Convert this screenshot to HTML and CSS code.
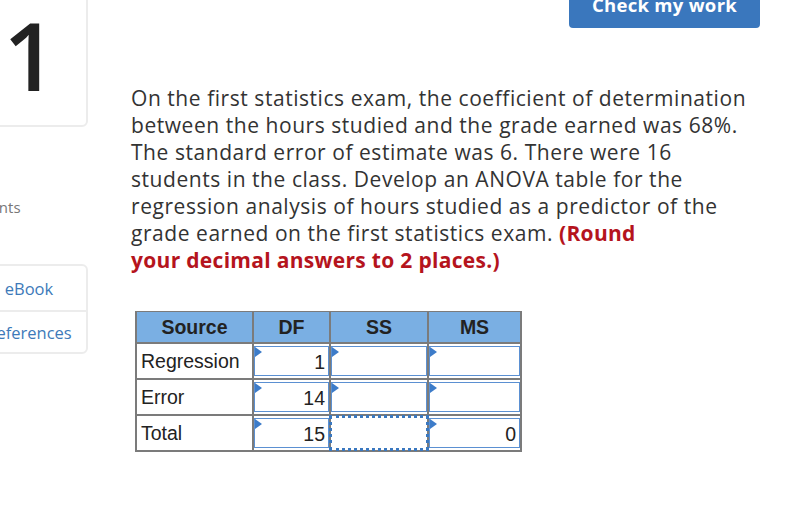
FILE: index.html
```html
<!DOCTYPE html>
<html>
<head>
<meta charset="utf-8">
<link rel="stylesheet" href="styles.css">
</head>
<body>
<div class="page">
  <aside class="sidebar">
    <div class="card num-card"><span class="qnum">1</span></div>
    <div class="points">Points</div>
    <div class="card links">
      <a class="link">eBook</a>
      <a class="link">References</a>
    </div>
  </aside>
  <main class="main">
    <div class="topbar"><button class="check">Check my work</button></div>
    <p class="question">On the first statistics exam, the coefficient of determination between the hours studied and the grade earned was 68%. The standard error of estimate was 6. There were 16 students in the class. Develop an ANOVA table for the regression analysis of hours studied as a predictor of the grade earned on the first statistics exam. <strong class="note">(Round<br>your decimal answers to 2 places.)</strong></p>
    <table class="anova">
      <thead>
        <tr><th class="c-src">Source</th><th class="c-df">DF</th><th class="c-ss">SS</th><th class="c-ms">MS</th></tr>
      </thead>
      <tbody>
        <tr>
          <td class="label">Regression</td>
          <td class="cell"><div class="box flag">1</div></td>
          <td class="cell"><div class="box flag"></div></td>
          <td class="cell"><div class="box flag"></div></td>
        </tr>
        <tr>
          <td class="label">Error</td>
          <td class="cell"><div class="box flag">14</div></td>
          <td class="cell"><div class="box flag"></div></td>
          <td class="cell"><div class="box flag"></div></td>
        </tr>
        <tr>
          <td class="label">Total</td>
          <td class="cell"><div class="box flag">15</div></td>
          <td class="cell focus"><div class="box dotted"></div></td>
          <td class="cell"><div class="box flag">0</div></td>
        </tr>
      </tbody>
    </table>
  </main>
</div>
</body>
</html>
```
FILE: styles.css
```css
html, body {
  margin: 0;
  padding: 0;
  background: #fff;
  overflow: hidden;
}
body {
  font-family: "Open Sans", "Lato", sans-serif;
  color: #333;
}
.page {
  display: flex;
  align-items: flex-start;
}
.sidebar {
  width: 120px;
  margin-left: -32px;
  flex: none;
  display: flex;
  flex-direction: column;
}
.card {
  border: 2px solid #ececec;
  border-radius: 6px;
  background: #fff;
}
.num-card {
  margin-top: -20px;
  height: 143px;
  display: flex;
  align-items: center;
  justify-content: center;
  padding-left: 4px;
}
.qnum {
  font-family: "Open Sans", sans-serif;
  font-size: 94px;
  line-height: 1;
  color: #222;
  font-weight: 600;
  margin-top: 2px;
}
.points {
  margin-top: 70px;
  padding-left: 9px;
  font-size: 15px;
  color: #777;
  height: 20px;
}
.links {
  margin-top: 47px;
  display: flex;
  flex-direction: column;
}
.link {
  height: 44px;
  display: flex;
  align-items: center;
  justify-content: center;
  padding-left: 2px;
  font-size: 16.5px;
  color: #3d7ab9;
}
.link + .link {
  height: 40px;
  border-top: 2px solid #ececec;
}
.main {
  flex: 1;
  margin-left: 41px;
  display: flex;
  flex-direction: column;
  align-items: flex-start;
}
.topbar {
  align-self: stretch;
  display: flex;
  justify-content: flex-end;
  padding-right: 33px;
}
.check {
  margin-top: -20px;
  width: 191px;
  height: 48px;
  background: #3a77bd;
  color: #fff;
  border: none;
  border-radius: 4px;
  font-family: "Open Sans", sans-serif;
  font-weight: 700;
  font-size: 18.5px;
  letter-spacing: 0.3px;
  padding: 0;
}
.question {
  margin: 57px 0 0 2px;
  width: 624px;
  font-size: 21px;
  letter-spacing: 0.55px;
  line-height: 27px;
  color: #333;
}
.note {
  color: #b5141d;
  font-weight: 700;
  letter-spacing: 0.3px;
}
.anova {
  margin-top: 37px;
  margin-left: 6px;
  border-collapse: collapse;
  font-family: "Liberation Sans", Arial, sans-serif;
  font-size: 19.5px;
  color: #222;
}
.anova th {
  background: #7aafe3;
  border: 2px solid #7b7b7b;
  border-top-width: 1px;
  height: 30px;
  font-weight: 700;
  padding: 0;
}
.c-src { width: 115px; }
.c-df { width: 75px; }
.c-ss { width: 96px; }
.c-ms { width: 91px; }
.anova td {
  border: 2px solid #7b7b7b;
  border-top: none;
  height: 32px;
  padding: 0;
}
.label {
  padding: 0 0 0 4px !important;
  text-align: left;
}
.cell {
  padding: 1px 0 !important;
}
.box {
  position: relative;
  height: 30px;
  box-sizing: border-box;
  border: 1px solid #5b90d2;
  text-align: right;
  padding-right: 3px;
  line-height: 30px;
}
.flag::before {
  content: "";
  position: absolute;
  left: 0;
  top: 0;
  border-top: 5px solid transparent;
  border-bottom: 5px solid transparent;
  border-left: 7px solid #3d7cc9;
}
.dotted {
  border: 3px dotted #3a78c0;
  margin: -3px -2px -3px -2px;
  height: 36px;
}
```
